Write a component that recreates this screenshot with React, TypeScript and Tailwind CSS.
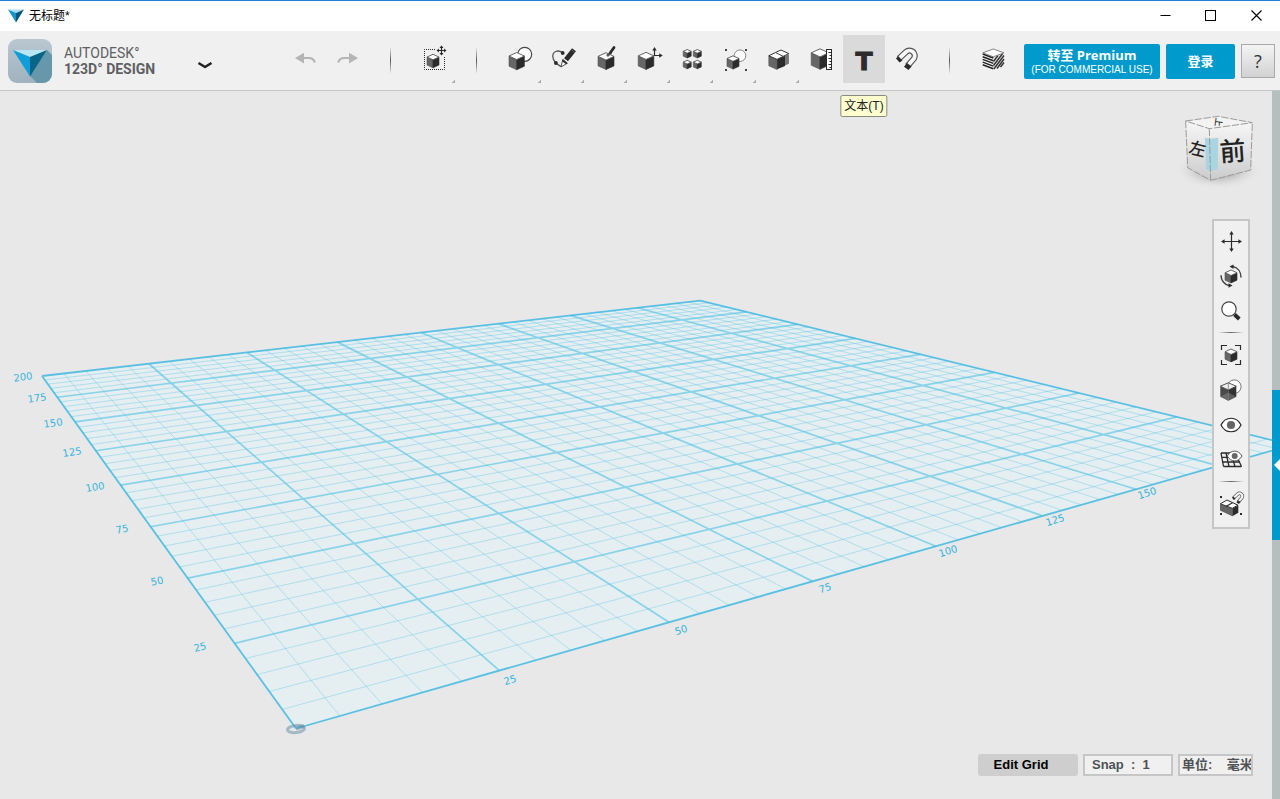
import type { ReactNode } from "react";

const DARK = "#2b2b2b";

/* ---------- workplane ---------- */

// Perspective projection of a point on the 200 x 200 mm workplane
function project(u: number, v: number) {
  const w = 0.003988 * u + 0.00615 * v + 1;
  return {
    x: (10.13 * u - 1.0117 * v + 296) / w,
    y: (0.3567 * u + 0.55 * v + 728.5) / w,
  };
}

function segment(u1: number, v1: number, u2: number, v2: number) {
  const a = project(u1, v1);
  const b = project(u2, v2);
  return `M${a.x.toFixed(2)} ${a.y.toFixed(2)}L${b.x.toFixed(2)} ${b.y.toFixed(2)}`;
}

const steps = Array.from({ length: 41 }, (_, i) => i * 5);
const minor = steps.filter((n) => n % 25 !== 0);
const major = steps.filter((n) => n % 25 === 0 && n !== 0 && n !== 200);

function lines(list: number[]) {
  return list.map((n) => segment(n, 0, n, 200) + segment(0, n, 200, n)).join("");
}

const outline =
  segment(0, 0, 200, 0) + segment(0, 0, 0, 200) + segment(0, 200, 200, 200) + segment(200, 0, 200, 200);

const corners = [
  [0, 0],
  [200, 0],
  [200, 200],
  [0, 200],
]
  .map(([u, v]) => {
    const p = project(u, v);
    return `${p.x},${p.y}`;
  })
  .join(" ");

const gridLabels = [
  { text: "25", x: 200, y: 647, angle: -14 },
  { text: "50", x: 157, y: 581, angle: -12 },
  { text: "75", x: 122, y: 529, angle: -11 },
  { text: "100", x: 95, y: 487, angle: -10 },
  { text: "125", x: 72, y: 452, angle: -9 },
  { text: "150", x: 53, y: 423, angle: -8 },
  { text: "175", x: 37, y: 398, angle: -7 },
  { text: "200", x: 23, y: 377, angle: -7 },
  { text: "25", x: 510, y: 680, angle: -17 },
  { text: "50", x: 681, y: 630, angle: -17 },
  { text: "75", x: 825, y: 588, angle: -17 },
  { text: "100", x: 948, y: 551, angle: -17 },
  { text: "125", x: 1055, y: 520, angle: -17 },
  { text: "150", x: 1147, y: 493, angle: -17 },
];

function Workplane() {
  return (
    <svg
      className="absolute inset-0 h-full w-full"
      viewBox="0 91 1272 708"
      preserveAspectRatio="xMidYMid slice"
      fill="none"
    >
      <polygon points={corners} fill="#e5eef0" />
      <path d={lines(minor)} stroke="#4fc3e8" strokeOpacity="0.36" />
      <path d={lines(major)} stroke="#45bfe6" strokeOpacity="0.58" strokeWidth="1.7" />
      <path d={outline} stroke="#3fb8e2" strokeOpacity="0.85" strokeWidth="1.8" />
      <ellipse cx="296" cy="729" rx="8.5" ry="3.6" stroke="#5f87a3" strokeOpacity="0.5" strokeWidth="3" transform="rotate(-6 296 729)" />
      <path d="M296 728.5L304 726" stroke="#5f87a3" strokeOpacity="0.5" strokeWidth="4" />
      <g
        fill="#35b4df"
        textAnchor="middle"
        dominantBaseline="central"
        className="font-['DejaVu_Sans'] text-[10px]"
      >
        {gridLabels.map((l) => (
          <text key={`${l.text}-${l.x}`} x={l.x} y={l.y} transform={`rotate(${l.angle} ${l.x} ${l.y})`}>
            {l.text}
          </text>
        ))}
      </g>
    </svg>
  );
}

/* ---------- icon parts ---------- */

// x, y is the rear corner of the top face
function Cube({ x, y, s, h }: { x: number; y: number; s: number; h: number }) {
  const d = s * 0.46;
  return (
    <g strokeLinejoin="round">
      <path d={`M${x - s} ${y + d}L${x} ${y + 2 * d}V${y + 2 * d + h}L${x - s} ${y + d + h}Z`} fill="#666" stroke="#555" strokeWidth="0.6" />
      <path d={`M${x + s} ${y + d}L${x} ${y + 2 * d}V${y + 2 * d + h}L${x + s} ${y + d + h}Z`} fill={DARK} stroke={DARK} strokeWidth="0.6" />
      <path d={`M${x} ${y}L${x + s} ${y + d}L${x} ${y + 2 * d}L${x - s} ${y + d}Z`} fill="#fff" stroke="#555" strokeWidth="0.9" />
    </g>
  );
}

function Magnet() {
  const d = "M13 23.5L20 17A5.2 5.2 0 0 1 28 23.5L21.5 31";
  return (
    <g fill="none">
      <path d={d} stroke="#555" strokeWidth="6.2" />
      <path d={d} stroke="#f7f7f7" strokeWidth="3.8" />
      <path d="M12.2 20.9L16.4 25.4L13.6 27.6L10 23.6Z" fill={DARK} />
      <path d="M21 27.9L25.6 31.4L22.4 35L18 31.8Z" fill={DARK} />
    </g>
  );
}

const selectIcon = (
  <>
    <rect x="11.5" y="14.5" width="20" height="20" fill="none" stroke={DARK} strokeDasharray="1 1" strokeDashoffset="0.5" />
    <rect x="22" y="11" width="12" height="10" fill="#f0f0f0" />
    <Cube x={20} y={19.3} s={6} h={8} />
    <path d="M24 15.5H33M28.5 11V20" stroke={DARK} strokeWidth="1.2" />
    <path d="M28.5 10.5l2 2.4h-4zM28.5 20.5l2-2.4h-4zM23.5 15.5l2.4-2v4zM33.5 15.5l-2.4-2v4z" fill={DARK} />
  </>
);

const tools: { name: string; menu: boolean; icon: ReactNode }[] = [
  {
    name: "Primitives",
    menu: true,
    icon: (
      <>
        <circle cx="25.7" cy="19.3" r="7" fill="#fff" stroke="#444" strokeWidth="1.2" />
        <Cube x={17.7} y={17.5} s={7.7} h={10.2} />
      </>
    ),
  },
  {
    name: "Sketch",
    menu: true,
    icon: (
      <>
        <path d="M20.7 17.7C15.5 14 10.5 17 10.8 21.5C11 25 12.2 26 13.7 28L19 31.6" fill="none" stroke="#555" strokeWidth="1.3" />
        <circle cx="20.7" cy="18" r="1.9" fill={DARK} />
        <circle cx="13.9" cy="28" r="1.9" fill={DARK} />
        <path d="M24 24.8L32 14.8" stroke={DARK} strokeWidth="5" />
        <path d="M29 14.2L32.8 18" stroke="#888" strokeWidth="0.6" />
        <path d="M19 32L20.8 24.5L25.3 28.2Z" fill="#fff" stroke="#444" strokeWidth="0.9" />
        <path d="M20.8 24.2L25.6 28.3L24 29.3L20.2 26.3Z" fill={DARK} />
      </>
    ),
  },
  {
    name: "Construct",
    menu: true,
    icon: (
      <>
        <Cube x={21} y={17.7} s={8} h={9.5} />
        <path d="M22 21L26 17.5" stroke="#555" strokeWidth="2.6" />
        <path d="M25.5 17.5L29 12.5" stroke={DARK} strokeWidth="2.8" strokeLinecap="round" />
      </>
    ),
  },
  {
    name: "Modify",
    menu: true,
    icon: (
      <>
        <Cube x={18} y={17.3} s={7.8} h={10} />
        <path d="M26.5 15V20.5H32" fill="none" stroke={DARK} strokeWidth="1.2" />
        <path d="M26.5 12l2.2 3.6h-4.4zM34.8 20.5l-3.6-2.2v4.4z" fill={DARK} />
      </>
    ),
  },
  {
    name: "Pattern",
    menu: true,
    icon: (
      <>
        <Cube x={16.2} y={14.5} s={4} h={4.8} />
        <Cube x={26.3} y={14.5} s={4} h={4.8} />
        <Cube x={16.2} y={25.3} s={4} h={4.8} />
        <Cube x={26.3} y={25.3} s={4} h={4.8} />
      </>
    ),
  },
  {
    name: "Grouping",
    menu: true,
    icon: (
      <>
        <path d="M11 14h2v2h-2zM31 14h2v2h-2zM11 34h2v2h-2zM31 34h2v2h-2z" fill="#444" />
        <circle cx="26" cy="20.7" r="5.8" fill="#fafafa" stroke="#888" />
        <Cube x={19} y={20.8} s={6} h={7.8} />
      </>
    ),
  },
  {
    name: "Combine",
    menu: true,
    icon: (
      <g strokeLinejoin="round">
        <path d="M19 26L31.5 19.8V28.5L21 33Z" fill="#777" stroke="#555" strokeWidth="0.6" />
        <path d="M20 23.8L28 21V31L20 34.3Z" fill={DARK} />
        <path d="M11.8 20.8L20 24.4V34.6L11.8 30.8Z" fill="#666" stroke="#555" strokeWidth="0.6" />
        <path d="M18.5 17.5L24 15L31.8 18.6L20 24.4L11.8 20.8Z" fill="#fff" stroke="#333" />
        <path d="M18.5 17.5L26 21.3" stroke="#444" />
      </g>
    ),
  },
  {
    name: "Measure",
    menu: false,
    icon: (
      <>
        <Cube x={20} y={13.8} s={8.8} h={12.4} />
        <rect x="26.5" y="14.5" width="5" height="20" fill="#fff" stroke={DARK} />
        <path d="M28.5 17.5H31M29.5 20.5H31M28.5 23.5H31M29.5 26.5H31M28.5 29.5H31M29.5 32.5H31" stroke={DARK} />
      </>
    ),
  },
];

const layersIcon = (
  <g fill="none">
    <path d="M10.7 18L21.3 22V35L10.7 31Z" fill="#f5f5f5" />
    <path d="M32 18L21.3 22V35L32 31Z" fill="#e4e4e4" />
    <path
      d="M10.7 19L21.3 23M10.7 21.7L21.3 25.7M10.7 24.4L21.3 28.4M10.7 27.1L21.3 31.1M10.7 29.8L21.3 33.8"
      stroke="#222"
      strokeWidth="1.5"
    />
    <path
      d="M21.5 26.5L26 20.5M21.5 30.5L30.5 18.8M21.8 34L32 20.5M25 33.5L32 24M28.5 32L32 27.5"
      stroke="#333"
      strokeWidth="1.4"
    />
    <path d="M21.3 14L32 17.8L21.3 21.8L10.7 17.8Z" fill="#fff" stroke="#777" strokeWidth="0.9" />
  </g>
);

/* ---------- view navigation ---------- */

const navGroups: { name: string; icon: ReactNode }[][] = [
  [
    {
      name: "Pan",
      icon: (
        <>
          <path d="M9 18.5H26M17.5 10V27" stroke={DARK} strokeWidth="1.2" />
          <path d="M17.5 8l2.2 3.6h-4.4zM17.5 29l2.2-3.6h-4.4zM7 18.5l3.6-2.2v4.4zM28 18.5l-3.6-2.2v4.4z" fill={DARK} />
        </>
      ),
    },
    {
      name: "Orbit",
      icon: (
        <>
          <Cube x={17} y={12} s={6} h={7.4} />
          <path d="M19 8.5C23.5 9.5 27 13.5 27 19.5M7 17.3C7 22.5 10.5 26.5 15 27.5" fill="none" stroke="#444" strokeWidth="1.5" />
          <path d="M15.5 8.5l4-2v4.4zM18.5 27.5l-4-2.2v4.4z" fill={DARK} />
        </>
      ),
    },
    {
      name: "Zoom",
      icon: (
        <>
          <circle cx="15" cy="16" r="7.2" fill="#fff" stroke="#444" strokeWidth="1.2" />
          <path d="M20.5 21.5L25.3 26" stroke={DARK} strokeWidth="3.8" />
        </>
      ),
    },
  ],
  [
    {
      name: "Fit",
      icon: (
        <>
          <path d="M7.5 13V8.5H13M21 8.5H26.5V13M26.5 23V27.5H21M13 27.5H7.5V23" fill="none" stroke={DARK} strokeWidth="1.2" />
          <Cube x={17} y={12} s={6} h={7.4} />
        </>
      ),
    },
    {
      name: "Materials",
      icon: (
        <>
          <circle cx="20.3" cy="14.7" r="6.8" fill="#fff" stroke="#777" />
          <path d="M6.3 14.2L14.3 18V28.7L6.3 24.8Z" fill="#4a4a4a" />
          <path d="M14.3 18L22.3 14.2V24.8L14.3 28.7Z" fill="#333" />
          <path d="M14.3 20.5L22.3 24.8L14.3 28.7L6.3 24.8Z" fill="#8a8a8a" fillOpacity="0.5" />
          <path d="M14.3 10.8L22.3 14.2L14.3 18L6.3 14.2Z" fill="#eee" stroke="#444" strokeWidth="0.9" />
          <path d="M14.3 10.8V18" stroke="#777" strokeWidth="0.8" />
        </>
      ),
    },
    {
      name: "Visibility",
      icon: (
        <>
          <path d="M7 18C11.5 9 22.5 9 27 18C22.5 27 11.5 27 7 18Z" fill="#fff" stroke={DARK} strokeWidth="1.2" />
          <circle cx="17" cy="18" r="4.1" fill="#666" />
        </>
      ),
    },
    {
      name: "Grid Visibility",
      icon: (
        <>
          <path
            d="M7 11H20M7.5 15.3H24M8 20H26M9.5 24.5H27.5M7 11L9.5 24.5M12 11L15 24.5M17 11L21 24.5M23 15L27.5 24.5"
            fill="none"
            stroke={DARK}
            strokeWidth="1.3"
          />
          <path d="M13.3 14C16.5 7.5 24.5 7.5 28 14C24.5 20.5 16.5 20.5 13.3 14Z" fill="#fff" stroke="#555" />
          <circle cx="20.7" cy="14" r="3" fill="#666" />
        </>
      ),
    },
  ],
  [
    {
      name: "Snapping",
      icon: (
        <>
          <path d="M6 10h2v2H6zM6 27h2v2H6zM26 27h2v2h-2z" fill={DARK} />
          <path d="M6 18L18.3 22.5V30.3L6 24.5Z" fill="#666" />
          <path d="M18.3 22.5L24.3 19.5V26.8L18.3 30.3Z" fill={DARK} />
          <path d="M6.3 17.8L13 14L24 19.2L18.3 22.3Z" fill="#fff" stroke={DARK} strokeLinejoin="round" />
          <path d="M12.3 20.2L18.5 16.7" stroke={DARK} strokeWidth="1.2" />
          <g transform="translate(12.5 -1.2) scale(.55)">
            <Magnet />
          </g>
        </>
      ),
    },
  ],
];

function NavBar() {
  return (
    <nav className="absolute top-32 right-[22px] flex w-[38px] flex-col border-2 border-[#c6c6c6] bg-[#f0f0f0] pt-0.5 pb-1.5">
      {navGroups.map((group, i) => (
        <div key={i} className="flex flex-col">
          {i > 0 && (
            <div className="flex h-[9px] items-center px-1">
              <div className="h-px w-full bg-linear-to-r from-transparent via-[#666] to-transparent" />
            </div>
          )}
          {group.map((item) => (
            <button key={item.name} type="button" aria-label={item.name} className="h-[35px] w-[34px]">
              <svg viewBox="0 0 34 35" className="h-full w-full">
                {item.icon}
              </svg>
            </button>
          ))}
        </div>
      ))}
    </nav>
  );
}

function ViewCube() {
  return (
    <svg
      className="absolute top-0 right-0 h-28 w-28 font-['Noto_Sans_CJK_SC',sans-serif]"
      viewBox="0 3 336 336"
      textAnchor="middle"
      dominantBaseline="central"
    >
      <defs>
        <linearGradient id="side" x1="0" y1="0" x2="0" y2="1">
          <stop offset="0" stopColor="#f6f6f6" />
          <stop offset="1" stopColor="#cccccc" />
        </linearGradient>
        <radialGradient id="shade">
          <stop offset="0.4" stopColor="#bdbdbd" />
          <stop offset="1" stopColor="#e8e8e8" stopOpacity="0" />
        </radialGradient>
      </defs>
      <ellipse cx="175" cy="240" rx="130" ry="58" fill="url(#shade)" />
      <path d="M77 93L148 116L152 271L83 233Z" fill="url(#side)" />
      <path d="M148 116L277 98L272 240L152 271Z" fill="url(#side)" />
      <path d="M77 93L175 79L277 98L148 116Z" fill="#f3f3f3" />
      <path d="M135 143L150 147L175 143L173 238L152 244L138 238Z" fill="#a8d5e1" />
      <path
        d="M77 93L175 79L277 98L148 116ZM77 93L83 233L152 271L272 240L277 98M148 116L152 271"
        fill="none"
        stroke="#9b9b9b"
        strokeWidth="3"
        strokeDasharray="22 5"
      />
      <text x="113" y="174" fontSize="50" fontWeight="500" fill="#222" transform="rotate(14 113 174)">
        左
      </text>
      <text x="217" y="177" fontSize="78" fontWeight="500" fill="#222" transform="rotate(-4 217 177)">
        前
      </text>
      <text x="178" y="97" fontSize="26" fontWeight="500" fill="#222" transform="rotate(98 178 97)">
        上
      </text>
    </svg>
  );
}

/* ---------- window chrome ---------- */

function TitleBar() {
  return (
    <header className="flex h-[31px] items-center border-t border-[#1a80d8] bg-white pl-2">
      <svg viewBox="0 0 16 14" className="h-3.5 w-4">
        <path d="M0 0.5H16L8 4Z" fill="#a6e0f3" />
        <path d="M0 0.5L8 4V13.5Z" fill="#1494c9" />
        <path d="M16 0.5L8 4V13.5Z" fill="#07587a" />
      </svg>
      <h1 className="ml-[5px] text-xs text-black">无标题*</h1>
      <div className="ml-auto flex items-center pb-px">
        <button type="button" aria-label="Minimize" className="flex h-[29px] w-[46px] items-center justify-center">
          <svg viewBox="0 0 11 11" className="size-[11px]">
            <path d="M0.5 5.5H10.5" stroke="#000" />
          </svg>
        </button>
        <button type="button" aria-label="Maximize" className="flex h-[29px] w-[45px] items-center justify-center">
          <svg viewBox="0 0 11 11" className="size-[11px]">
            <rect x="0.5" y="0.5" width="10" height="10" fill="none" stroke="#000" />
          </svg>
        </button>
        <button type="button" aria-label="Close" className="flex h-[29px] w-[47px] items-center justify-center">
          <svg viewBox="0 0 11 11" className="size-[11px]">
            <path d="M0.5 0.5L10.5 10.5M10.5 0.5L0.5 10.5" stroke="#000" strokeWidth="1.1" />
          </svg>
        </button>
      </div>
    </header>
  );
}

function AppLogo() {
  return (
    <svg viewBox="0 0 44 44" className="mt-2 size-11 shrink-0">
      <defs>
        <linearGradient id="tile" x1="0" y1="0" x2="0" y2="1">
          <stop offset="0" stopColor="#b9c7d0" />
          <stop offset="1" stopColor="#9fb2be" />
        </linearGradient>
        <clipPath id="tileClip">
          <rect width="44" height="44" rx="9" />
        </clipPath>
      </defs>
      <g clipPath="url(#tileClip)">
        <rect width="44" height="44" fill="url(#tile)" />
        <path d="M39 11L44 16V44H29L22 37Z" fill="#6797aa" />
        <path d="M5 11H39L22 18Z" fill="#b9e6f5" />
        <path d="M5 11L22 18V37.5Z" fill="#0d9edb" />
        <path d="M39 11L22 18V37.5Z" fill="#0a6488" />
      </g>
    </svg>
  );
}

function Divider({ className }: { className: string }) {
  return <div className={`mt-4 h-[27px] w-px shrink-0 bg-linear-to-b from-transparent via-[#555] to-transparent ${className}`} />;
}

function Tool({ name, menu, children }: { name: string; menu?: boolean; children: ReactNode }) {
  return (
    <button type="button" aria-label={name} className="h-12 w-[42px] shrink-0">
      <svg viewBox="0 0 42 48" className="h-full w-full">
        {children}
        {menu && <path d="M42 45V48H39Z" fill="#aaa" stroke="#aaa" strokeWidth="0.6" />}
      </svg>
    </button>
  );
}

function Toolbar() {
  return (
    <div className="flex h-[60px] items-start border-b border-[#c5c5c5] bg-[#f0f0f0] pr-[5px] pl-2">
      <AppLogo />
      <div className="mt-[14px] ml-3 w-[104px] shrink-0 font-['Roboto',sans-serif] text-[14px] leading-4 whitespace-nowrap text-[#5e6063]">
        <p className="h-4">AUTODESK°</p>
        <p className="h-4 font-bold">123D° DESIGN</p>
      </div>
      <button type="button" aria-label="Menu" className="mt-6 ml-[29px] h-5 w-4 shrink-0">
        <svg viewBox="0 0 16 20" className="h-full w-full">
          <path d="M1.5 8L8 12L14.500 8" fill="none" stroke="#222" strokeWidth="2.6" strokeLinejoin="round" />
        </svg>
      </button>

      <div className="mt-[18px] ml-[82px] flex shrink-0 gap-5">
        <button type="button" aria-label="Undo" className="h-[18px] w-[22px]">
          <svg viewBox="0 0 22 18" className="h-full w-full">
            <path d="M0 9L9 3.8V14.6Z" fill="#b5b5b5" />
            <path d="M8 9H13.5C17 9 19 10.3 19.8 13.5" fill="none" stroke="#b5b5b5" strokeWidth="2.2" />
          </svg>
        </button>
        <button type="button" aria-label="Redo" className="h-[18px] w-[22px]">
          <svg viewBox="0 0 22 18" className="h-full w-full">
            <path d="M21 9L12 3.8V14.6Z" fill="#b5b5b5" />
            <path d="M13 9H7.5C4 9 2 10.3 1.2 13.5" fill="none" stroke="#b5b5b5" strokeWidth="2.2" />
          </svg>
        </button>
      </div>

      <Divider className="ml-[31px]" />
      <div className="mt-1 ml-[22px] flex">
        <Tool name="Transform" menu>
          {selectIcon}
        </Tool>
      </div>
      <Divider className="ml-[21px]" />

      <div className="mt-1 ml-[22px] flex gap-px">
        {tools.map((t) => (
          <Tool key={t.name} name={t.name} menu={t.menu}>
            {t.icon}
          </Tool>
        ))}
        <div className="relative">
          <button
            type="button"
            aria-describedby="text-tip"
            className="flex h-12 w-[42px] items-center justify-center bg-[#dadada] pt-1 font-['DejaVu_Sans'] text-[25px] leading-none font-bold text-[#2b2b2b] [-webkit-text-stroke:1px_#2b2b2b]"
          >
            T
          </button>
          <span
            id="text-tip"
            role="tooltip"
            className="absolute top-[60px] left-1/2 z-10 -translate-x-1/2 rounded-xs border border-[#8a8a80] bg-[#ffffcf] px-[3px] text-xs leading-5 whitespace-nowrap text-[#222]"
          >
            文本(T)
          </span>
        </div>
        <Tool name="Snap">
          <Magnet />
        </Tool>
      </div>
      <Divider className="ml-[21px]" />
      <div className="mt-1 ml-[22px] flex">
        <Tool name="Material">{layersIcon}</Tool>
      </div>

      <div className="mt-[13px] ml-auto flex shrink-0 gap-1.5">
        <button
          type="button"
          className="flex h-[35px] w-[136px] flex-col items-center justify-center rounded-xs bg-[#009bcc] whitespace-nowrap text-white"
        >
          <span className="font-['Open_Sans','Noto_Sans_CJK_SC',sans-serif] text-[13px] leading-4 font-bold">转至 Premium</span>
          <span className="text-[10px] leading-[14px]">(FOR COMMERCIAL USE)</span>
        </button>
        <button type="button" className="h-[35px] w-[69px] rounded-xs bg-[#009bcc] text-[13px] font-bold text-white">
          登录
        </button>
        <button
          type="button"
          className="h-[34px] w-[34px] border border-[#a9a9a9] bg-linear-to-b from-[#f4f4f4] to-[#d2d2d2] font-['Open_Sans',sans-serif] text-lg leading-none text-[#333]"
        >
          ?
        </button>
      </div>
    </div>
  );
}

function StatusControls() {
  return (
    <div className="absolute right-[19px] bottom-[23px] flex gap-[5px] text-[13px] leading-[18px] font-bold text-[#4f5254]">
      <button type="button" className="h-[22px] w-[100px] rounded-[3px] bg-[#cecece] pr-3.5 text-black">
        Edit Grid
      </button>
      <button type="button" className="h-[22px] w-[90px] border-2 border-[#c6c6c6] bg-[#f0f0f0] px-[7px] text-left whitespace-pre">
        Snap  :  1
      </button>
      <button
        type="button"
        className="h-[22px] w-[75px] overflow-hidden border-2 border-[#c6c6c6] bg-[#f0f0f0] pl-0.5 text-left whitespace-pre"
      >
        单位:    毫米
      </button>
    </div>
  );
}

export default function App() {
  return (
    <div className="flex min-h-screen flex-col bg-[#e8e8e8] font-['Liberation_Sans','Noto_Sans_CJK_SC',sans-serif]">
      <TitleBar />
      <Toolbar />
      <div className="flex flex-1">
        <main className="relative flex-1 overflow-hidden">
          <Workplane />
          <ViewCube />
          <NavBar />
          <StatusControls />
        </main>
        <aside className="w-2 bg-[#b5c0be] pt-[299px]">
          <button type="button" aria-label="Open panel" className="flex h-[150px] w-2 items-center justify-end bg-[#009bcc]">
            <svg viewBox="0 0 6 12" className="h-3 w-1.5">
              <path d="M6 0V12L0 6Z" fill="#fff" />
            </svg>
          </button>
        </aside>
      </div>
    </div>
  );
}
